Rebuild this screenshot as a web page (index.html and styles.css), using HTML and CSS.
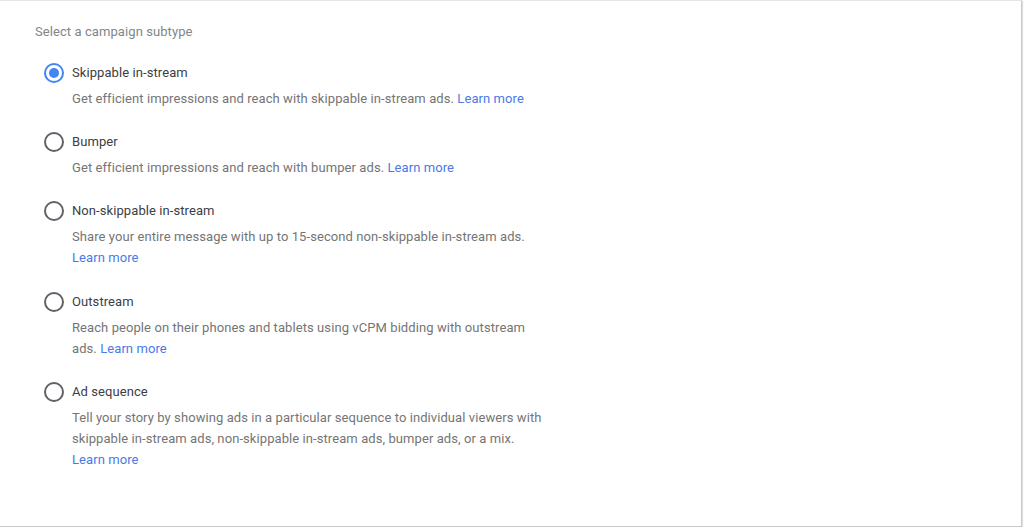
FILE: index.html
```html
<!DOCTYPE html>
<html>
<head>
<meta charset="utf-8">
<link rel="stylesheet" href="styles.css">
</head>
<body>
<div class="card">
  <div class="heading">Select a campaign subtype</div>
  <div class="options">
    <div class="option">
      <span class="radio checked"></span>
      <div class="body">
        <div class="title">Skippable in-stream</div>
        <div class="desc">Get efficient impressions and reach with skippable in-stream ads. <a class="link">Learn more</a></div>
      </div>
    </div>
    <div class="option">
      <span class="radio"></span>
      <div class="body">
        <div class="title">Bumper</div>
        <div class="desc">Get efficient impressions and reach with bumper ads. <a class="link">Learn more</a></div>
      </div>
    </div>
    <div class="option">
      <span class="radio"></span>
      <div class="body">
        <div class="title">Non-skippable in-stream</div>
        <div class="desc">Share your entire message with up to 15-second non-skippable in-stream ads. <a class="link">Learn more</a></div>
      </div>
    </div>
    <div class="option">
      <span class="radio"></span>
      <div class="body">
        <div class="title">Outstream</div>
        <div class="desc">Reach people on their phones and tablets using vCPM bidding with outstream ads. <a class="link">Learn more</a></div>
      </div>
    </div>
    <div class="option">
      <span class="radio"></span>
      <div class="body">
        <div class="title">Ad sequence</div>
        <div class="desc">Tell your story by showing ads in a particular sequence to individual viewers with skippable in-stream ads, non-skippable in-stream ads, bumper ads, or a mix. <a class="link">Learn more</a></div>
      </div>
    </div>
  </div>
</div>
</body>
</html>
```
FILE: styles.css
```css
html, body {
  margin: 0;
  padding: 0;
  background: #ffffff;
}
body {
  font-family: Roboto, "Liberation Sans", Arial, sans-serif;
  font-size: 13px;
  letter-spacing: 0.08px;
}
.card {
  box-sizing: border-box;
  width: 1022px;
  height: 527px;
  border-top: 1px solid #e6e6e6;
  border-right: 1px solid #c8c8c8;
  border-bottom: 1px solid #c8c8c8;
  box-shadow: 1px 1px 1px rgba(0, 0, 0, 0.12);
  padding: 21px 0 0 35px;
  background: #fff;
}
.heading {
  line-height: 20px;
  color: #80868b;
}
.options {
  display: flex;
  flex-direction: column;
  gap: 23.2px;
  margin-top: 21px;
  padding-left: 9px;
}
.option {
  display: flex;
  gap: 8px;
  align-items: flex-start;
}
.radio {
  box-sizing: border-box;
  flex: 0 0 20px;
  width: 20px;
  height: 20px;
  border: 2px solid #5f6368;
  border-radius: 50%;
  display: flex;
  align-items: center;
  justify-content: center;
}
.radio.checked {
  border-color: #4285f4;
}
.radio.checked::after {
  content: "";
  width: 10px;
  height: 10px;
  border-radius: 50%;
  background: #4285f4;
}
.title {
  line-height: 20px;
  color: #3c4043;
}
.desc {
  margin-top: 5px;
  line-height: 21px;
  color: #757575;
  max-width: 474px;
}
.link {
  color: #4a7ae6;
  text-decoration: none;
}
```
